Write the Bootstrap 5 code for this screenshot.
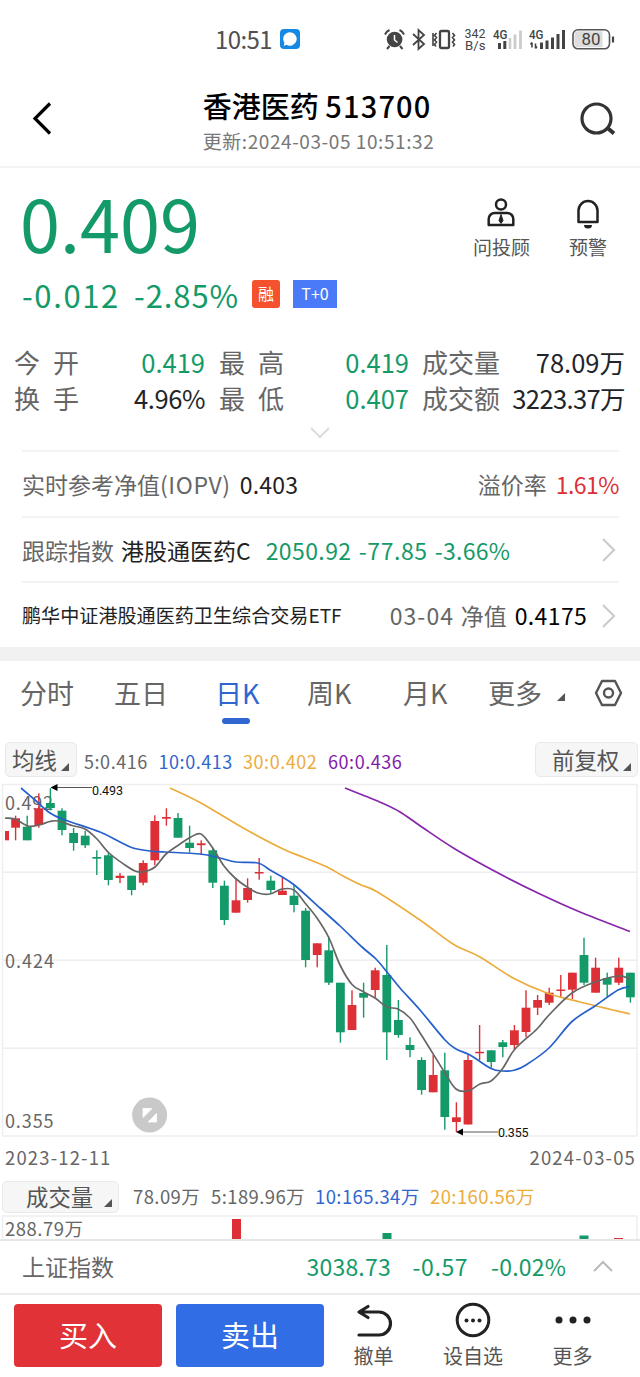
<!DOCTYPE html>
<html lang="zh-CN">
<head>
<meta charset="utf-8">
<meta name="viewport" content="width=device-width, initial-scale=1">
<title>香港医药 513700</title>
<link href="https://cdn.jsdelivr.net/npm/bootstrap@5.3.0/dist/css/bootstrap.min.css" rel="stylesheet">
<style>
:root{--up:#dc3036;--down:#149a68;--brand:#2f66d0;--ink:#222;--soft:#666;}
body{font-family:"Noto Sans CJK SC","Noto Sans",sans-serif;width:640px;height:1377px;overflow:hidden;background:#fff;color:var(--ink);line-height:1;font-size:23px}
svg{display:block;flex:none;overflow:visible}
.screen{height:1377px}
.screen>*{flex:none}
span,a{white-space:nowrap}
.c-up{color:var(--up)}.c-down{color:var(--down)}.c-soft{color:var(--soft)}.c-brand{color:var(--brand)}
.c-gold{color:#ecac3c}.c-violet{color:#8020a8}
.status{height:78px;padding:0 25px 0 215px;color:#505050}
.status .clock{font-size:24px;letter-spacing:-.6px;width:65px}
.titlebar{height:90px;border-bottom:2px solid #f3f3f3;padding:0 23px 4px 31px}
.titlebar h1{font-size:29px;font-weight:500;margin:0;color:#000;line-height:1}
.titlebar h1 b{font-weight:500;letter-spacing:1.2px}
.stamp{font-size:19px;letter-spacing:.58px;color:#777;margin-top:11px}
.quote{height:170px;padding:0 22px}
.price{font-size:72px;margin:18px 0 0 -2px}
.delta{font-size:31px;margin-top:18px;height:36px}
.tag{height:28px;font-size:16px;color:#fff;display:flex;align-items:center;justify-content:center;padding-bottom:2px}
.act{font-size:19px;color:#555}
.metrics{height:70px;display:grid;grid-template-columns:65px 126px 14px 65px 125px 13px 78px 125px;grid-template-rows:36px 36px;padding-left:14px;font-size:26px;color:var(--soft);align-items:center}
.metrics span{text-align:right}
.metrics .num{font-size:25.5px}
.metrics .lab{display:flex;justify-content:space-between}
.info{height:65.5px;border-top:2px solid #f3f3f3;margin:0 21px 0 22px;padding-top:2px}
.band{height:14px;background:#f1f1f1}
.tabs{height:79px;font-size:27px;color:var(--soft);padding:18px 0 0 20px}
.tabs .bar{width:28px;height:6px;border-radius:3px;background:var(--brand);margin:12px 0 0 7px}
.corner{width:0;height:0;border-left:8px solid transparent;border-bottom:8px solid #555;display:inline-block}
.pill{background:#f6f6f6;border:1.5px solid #e9e9e9;border-radius:5px;height:35px;font-size:22.4px;color:#555}
.tools{height:44px;font-size:18px;letter-spacing:.55px;padding:2.5px 2px 0 5px}
.dates{height:43px;font-size:18.5px;letter-spacing:1.15px;color:var(--soft);padding:10px 5px 0}
.vols{height:34px;font-size:18.5px;letter-spacing:.4px;padding:0 0 1px 2px}
.index{height:56px;border-top:2px solid #e6e6e6;border-bottom:2px solid #ececec;padding:0 25px 0 22px}
.trade{height:83px;padding:9px 0 0 14px}
.trade .btn{width:148px;height:63px;border:0;border-radius:4px;color:#fff;font-size:29px;line-height:1;padding:0 0 2px}
.foot{font-size:20px;color:#555}
</style>
</head>
<body>
<div class="screen d-flex flex-column">

<div class="status d-flex align-items-center">
  <span class="clock">10:51</span>
  <svg width="20" height="20" viewBox="0 0 20 20"><rect width="20" height="20" rx="4" fill="#1689e4"/><path d="M10 3.200a6.800 6.800 0 1 1-3.600 12.600L3.800 17l.6-3.200A6.800 6.800 0 0 1 10 3.200z" fill="#fff"/></svg>
  <svg class="ms-auto" width="231" height="26" viewBox="384 26 231 26" fill="none" stroke="#444">
    <circle cx="394.600" cy="39.500" r="7.800" fill="#444" stroke="none"/><path d="M394.500 35v5l3 2.500" stroke="#fff" stroke-width="1.500"/>
    <path d="M385 34.500a9 9 0 0 1 4.500-4.500M404 34.500a9 9 0 0 0-4.500-4.500M389.500 46l-2.500 3M400 46l2.500 3" stroke-width="2"/>
    <path d="M413 34l11 10-5.500 5V30l5.500 5-11 10" stroke-width="1.800"/>
    <rect x="440" y="31" width="9" height="17" rx="1.500" stroke-width="2.300"/>
    <path d="M436.500 33l-2 2.500 2 2-2 2.500 2 2-2 2.500 1.500 2M433 33v13M452.500 33l2 2.500-2 2 2 2.500-2 2 2 2.500-1.500 2" stroke-width="1.600"/>
    <g fill="#444" stroke="none" font-family="Roboto,sans-serif" font-size="12.500"><text x="464.500" y="38" textLength="21" lengthAdjust="spacingAndGlyphs">342</text><text x="465" y="50" textLength="20.500" lengthAdjust="spacingAndGlyphs">B/s</text></g>
    <g fill="#444" stroke="none" font-family="Roboto,sans-serif" font-size="12" font-weight="500"><text x="493" y="38.500" textLength="14.500" lengthAdjust="spacingAndGlyphs">4G</text><text x="529" y="38.500" textLength="14.500" lengthAdjust="spacingAndGlyphs">4G</text></g>
    <path d="M499.500 49v-6M504.800 49v-8" stroke-width="3"/><path d="M510 49v-11" stroke="#ccc" stroke-width="2.600"/><path d="M515 49v-14.500M520.500 49v-18.500" stroke="#ccc" stroke-width="2.800"/>
    <path d="M532 42.500v5M535.500 43.500v5M530.500 44.500l1.500-2M537 46.500l-1.500 2" stroke-width="1.600"/>
    <path d="M541.500 49v-6.500M547 49v-8.500M552.500 49v-11.500M558 49v-15M563.500 49v-19" stroke-width="3"/>
    <rect x="573" y="29.800" width="36.500" height="19" rx="5" stroke-width="1.600" stroke="#555" fill="#fff"/><path d="M578 31.300h24.500v16H578a3.500 3.500 0 0 1-3.500-3.500v-9a3.500 3.500 0 0 1 3.500-3.500z" fill="#ddd" stroke="none"/><path d="M613 36.500v6" stroke-width="2.200"/>
    <text x="581.500" y="45.300" font-family="Roboto,sans-serif" font-size="17" fill="#444" stroke="none" textLength="19" lengthAdjust="spacingAndGlyphs">80</text>
  </svg>
</div>

<header class="titlebar d-flex align-items-center justify-content-between">
  <svg width="22" height="36" viewBox="0 0 22 36"><path d="M19 1.500L4 16.500l15 15" fill="none" stroke="#000" stroke-width="3.200"/></svg>
  <div style="padding-left:5px">
    <h1>香港医药 <b>513700</b></h1>
    <div class="stamp">更新:2024-03-05 10:51:32</div>
  </div>
  <svg width="38" height="36" viewBox="0 0 38 36"><g fill="none" stroke="#333" stroke-width="3.200"><circle cx="17.500" cy="16.500" r="14.500"/><path d="M28 25.500l7 6" stroke-width="4"/></g></svg>
</header>

<section class="quote d-flex justify-content-between">
  <div>
    <div class="price c-down">0.409</div>
    <div class="delta d-flex align-items-center c-down">
      <span style="letter-spacing:1.6px;width:112px">-0.012</span><span style="letter-spacing:.9px;width:118px">-2.85%</span>
      <span class="tag" style="width:28px;background:#f4512c;border-radius:3px">融</span>
      <span class="tag" style="width:44px;margin-left:13px;background:#4a7af8">T+0</span>
    </div>
  </div>
  <div class="d-flex act" style="padding:31px 11px 0 0;gap:39px">
    <div class="d-flex flex-column align-items-center">
      <svg width="28" height="30" viewBox="0 0 28 30" fill="none" stroke="#222" stroke-width="2.500"><circle cx="14" cy="5.500" r="5"/><path d="M1.700 26V20a6 6 0 0 1 6-6h12.600a6 6 0 0 1 6 6v6z" stroke-linejoin="round"/><path d="M14 15.500l2 6-2 3-2-3z" fill="#222" stroke-width="1"/></svg>
      <span style="margin-top:8px">问投顾</span>
    </div>
    <div class="d-flex flex-column align-items-center">
      <svg width="28" height="30" viewBox="0 0 28 30"><path d="M4.500 23V11.500a9.500 9.500 0 0 1 19 0V23z" fill="none" stroke="#222" stroke-width="2.500" stroke-linejoin="round"/><path d="M10 26h8a4 3.500 0 0 1-8 0z" fill="#222"/></svg>
      <span style="margin-top:8px">预警</span>
    </div>
  </div>
</section>

<section class="metrics" style="margin-top:6px">
  <span class="lab"><i class="fst-normal">今</i><i class="fst-normal">开</i></span><span class="num c-down">0.419</span><i></i>
  <span class="lab"><i class="fst-normal">最</i><i class="fst-normal">高</i></span><span class="num c-down">0.419</span><i></i>
  <span>成交量</span><span class="num text-dark">78.09万</span>
  <span class="lab"><i class="fst-normal">换</i><i class="fst-normal">手</i></span><span class="num text-dark" style="letter-spacing:-.4px">4.96%</span><i></i>
  <span class="lab"><i class="fst-normal">最</i><i class="fst-normal">低</i></span><span class="num c-down">0.407</span><i></i>
  <span>成交额</span><span class="num text-dark" style="letter-spacing:-.6px">3223.37万</span>
</section>
<div class="d-flex justify-content-center" style="height:36px;padding-top:12px"><svg width="22" height="14" viewBox="0 0 22 14"><path d="M2 2l9 9 9-9" fill="none" stroke="#ddd" stroke-width="2"/></svg></div>

<div class="info d-flex align-items-center">
  <span class="c-soft">实时参考净值<span style="letter-spacing:.6px">(IOPV)</span></span><span style="margin-left:9px;letter-spacing:.2px">0.403</span>
  <span class="ms-auto c-soft">溢价率</span><span class="c-up" style="margin-left:9px;letter-spacing:-.5px">1.61%</span>
</div>
<div class="info d-flex align-items-center">
  <span class="c-soft">跟踪指数</span><span style="margin-left:7px">港股通医药C</span>
  <span class="c-down" style="margin-left:15px;letter-spacing:.4px;width:93px">2050.92</span><span class="c-down" style="letter-spacing:.6px;width:76px">-77.85</span><span class="c-down" style="letter-spacing:.3px">-3.66%</span>
  <svg class="ms-auto" width="18" height="26" viewBox="0 0 18 26"><path d="M2 2l11 11L2 24" fill="none" stroke="#ccc" stroke-width="2.200"/></svg>
</div>
<div class="info d-flex align-items-center">
  <span style="font-size:19.1px">鹏华中证港股通医药卫生综合交易ETF</span>
  <span class="c-soft" style="margin-left:48px;letter-spacing:1.1px;width:71px">03-04</span><span class="c-soft">净值</span><span style="margin-left:8px;letter-spacing:.4px;color:#000">0.4175</span>
  <svg class="ms-auto" width="18" height="26" viewBox="0 0 18 26"><path d="M2 2l11 11L2 24" fill="none" stroke="#ccc" stroke-width="2.200"/></svg>
</div>
<div class="band"></div>

<nav class="tabs d-flex">
  <span style="width:94px">分时</span><span style="width:101px">五日</span>
  <div class="c-brand" style="width:92px"><span>日K</span><div class="bar"></div></div>
  <span style="width:96px">周K</span><span style="width:85px">月K</span><span>更多</span>
  <i class="corner" style="margin:14px 0 0 15px"></i>
  <svg style="margin:0 0 0 28px" width="32" height="28" viewBox="0 0 32 28" fill="none" stroke="#555" stroke-width="2.400" stroke-linejoin="round"><path d="M9 2h13l6 12-6 12H9L3 14z"/><circle cx="15.500" cy="14" r="4.500"/></svg>
</nav>

<div class="tools d-flex">
  <div class="pill d-flex align-items-center" style="width:72px;padding-left:6px;letter-spacing:0"><span>均线</span><i class="corner" style="margin:15px 0 0 4px"></i></div>
  <div class="d-flex align-items-center c-soft" style="height:37px;margin-left:7px">
    <span style="width:74.500px">5:0.416</span><span class="c-brand" style="width:84.500px">10:0.413</span><span class="c-gold" style="width:85px">30:0.402</span><span class="c-violet">60:0.436</span>
  </div>
  <div class="pill d-flex align-items-center ms-auto" style="width:103px;padding-left:16px;letter-spacing:0"><span>前复权</span><i class="corner" style="margin:15px 0 0 4px"></i></div>
</div>

<svg width="640" height="354" viewBox="0 784 640 354">
  <path d="M2 784.500H637M2 872.300H637M2 960.300H637M2 1048.300H637M2 1136H637M2.500 784V1136M637 784V1136" stroke="#eee" stroke-width="1.500" fill="none"/>
  <g font-size="18" fill="#666"><text x="5" y="809.500" textLength="48">0.492</text><text x="5" y="968" textLength="49">0.424</text><text x="5" y="1127.500" textLength="48.500">0.355</text></g>
  <g id="candles"></g>
  <g id="averages" fill="none" stroke-width="1.700"></g>
  <g stroke="#555" stroke-width="1"><path d="M57 787.500H92M462 1132H498"/></g>
  <path d="M50.500 787.500l7-3.500v7zM456 1132l7-3.500v7z" fill="#000"/>
  <g font-family="Roboto,sans-serif" font-size="12.500" fill="#111"><text x="92" y="794.500" textLength="31">0.493</text><text x="498" y="1136.500" textLength="30.500">0.355</text></g>
  <circle cx="149.600" cy="1115" r="17.500" fill="#c9c9c9"/>
  <path d="M143 1108.500h9l-9 9zM156.500 1113.500v8.500h-8.500z" fill="#fff" stroke="#fff" stroke-width=".8" stroke-linejoin="round"/>
</svg>

<div class="dates d-flex justify-content-between"><span>2023-12-11</span><span style="margin-right:-1px">2024-03-05</span></div>

<div class="vols d-flex align-items-center">
  <div class="pill d-flex align-items-center" style="width:117px;height:32px;padding:0 0 1px 23px;letter-spacing:0"><span>成交量</span><i class="corner" style="margin:13px 0 0 11px"></i></div>
  <div class="d-flex c-soft" style="margin:-2px 0 0 14px"><span style="width:78px">78.09万</span><span style="width:104px">5:189.96万</span><span class="c-brand" style="width:115px">10:165.34万</span><span class="c-gold">20:160.56万</span></div>
</div>
<svg width="640" height="24" viewBox="0 1215 640 24">
  <path d="M2 1216H637M2.500 1216V1239M637 1216V1239" stroke="#eee" stroke-width="1.500" fill="none"/>
  <text x="5" y="1236" font-size="18.500" fill="#666" textLength="78">288.79万</text>
  <path d="M232 1219h9v20h-9zM614 1238h9v1h-9z" fill="#dc3036"/><path d="M382.500 1233h9v6h-9zM579.500 1235.500h9v3.500h-9z" fill="#149a68"/>
</svg>

<div class="index d-flex align-items-center">
  <span class="c-soft">上证指数</span>
  <span class="ms-auto c-down" style="width:106px;letter-spacing:.2px">3038.73</span><span class="c-down" style="width:78.500px;letter-spacing:.6px">-0.57</span><span class="c-down" style="width:75px;letter-spacing:.2px">-0.02%</span>
  <svg style="margin-left:27px" width="22" height="14" viewBox="0 0 22 14"><path d="M1 11l9-9 9 9" fill="none" stroke="#bbb" stroke-width="2"/></svg>
</div>

<footer class="trade d-flex">
  <button class="btn" style="background:#e03237">买入</button>
  <button class="btn" style="background:#316de4;margin-left:14px">卖出</button>
  <div class="d-flex foot">
    <div class="d-flex flex-column align-items-center" style="width:99px">
      <svg width="38" height="36" viewBox="0 0 38 36" fill="none" stroke="#222" stroke-width="3.200" stroke-linecap="round" stroke-linejoin="round"><path d="M13 2.500L4 8l9 5.500M4 8h20a11.500 11.500 0 0 1 0 23H4"/></svg>
      <span style="margin-top:6px">撤单</span>
    </div>
    <div class="d-flex flex-column align-items-center" style="width:100px">
      <svg width="36" height="36" viewBox="0 0 36 36"><circle cx="18" cy="16" r="15.800" fill="none" stroke="#222" stroke-width="3"/><g fill="#222"><circle cx="11.500" cy="16.500" r="2"/><circle cx="18" cy="16.500" r="2"/><circle cx="24.500" cy="16.500" r="2"/></g></svg>
      <span style="margin-top:6px">设自选</span>
    </div>
    <div class="d-flex flex-column align-items-center" style="width:99px">
      <svg width="36" height="36" viewBox="0 0 36 36" fill="#222"><circle cx="4" cy="16" r="3.500"/><circle cx="18" cy="16" r="3.500"/><circle cx="32" cy="16" r="3.500"/></svg>
      <span style="margin-top:6px">更多</span>
    </div>
  </div>
</footer>
</div>

<script src="https://cdn.jsdelivr.net/npm/bootstrap@5.3.0/dist/js/bootstrap.bundle.min.js"></script>
<script>
// Each candle: [rising, body top, body bottom, high, low]
const candles = [
[1,818.3,827.7,815.7,840.3],[0,826.7,840.3,815.7,840.3],[1,808.3,825,793.3,827.7],[0,803,808,788.3,810.3],[0,810.7,830,808.3,835.3],
[0,833,843,828,850.7],[0,835.7,845.3,830.7,848],[0,857,858.7,850.3,875],[0,855.3,880,852.7,885.3],[1,875.7,878,873,883],
[0,875.7,890,875.7,895.3],[1,863,882.7,860.3,885.3],[1,821,860.3,815.3,865.3],[1,817,818.7,808.3,825.7],[0,818,837.7,813,837.7],
[0,842.7,848,825.7,852.3],[1,843.3,845.2,840.3,855],[0,850.3,882.7,847.7,888],[0,885.7,920,880.7,925],[1,900.3,912.7,878.3,912.7],
[1,888,900,878.3,902.7],[1,872,873.5,858,879.7],[0,880.7,890,875.7,893.7],[1,890.7,895,876.7,895],[0,895.7,905,884.3,912.3],
[0,910.7,960,908,967.3],[1,943.3,955,943.3,967.3],[0,950.3,982.7,936.7,985],[0,982.7,1032.3,982.7,1042.7],[1,1005,1030,990.3,1030],
[0,993,997.7,982.7,1017.7],[1,970.3,990,967.7,997.7],[0,975,1032.3,945,1060],[0,1020,1035,1000,1037.7],[0,1045,1050,1037.3,1057.3],
[0,1060,1090,1057.3,1094.7],[1,1075,1092.3,1055,1092.3],[0,1070.3,1117,1052.7,1129.7],[1,1117.3,1122,1102.3,1132],[1,1060,1124.5,1055,1124.5],
[1,1051.8,1053.3,1025,1060],[0,1050.3,1062,1050.3,1068.7],[0,1042.3,1047,1040,1057.3],[1,1030.3,1045,1025,1050],[1,1007.7,1032,990.3,1037.3],
[1,1000,1007.7,995,1015],[1,992.7,1002.7,987.7,1005],[1,989.5,991,975,997],[1,972.7,989.7,972.7,999],[0,955,982.7,937.7,985],
[1,967.7,992.7,957.7,992.7],[0,978,984.7,972.7,998],[1,967.7,982.7,957.7,985],[0,972.7,997.3,972.7,1002.7]];
let bars = '<rect x="5" y="831" width="4" height="9.300" fill="#dc3036"/>';
candles.forEach(([up, top, bottom, high, low], i) => {
  const x = 15.6 + 11.6 * i, fill = up ? '#dc3036' : '#149a68';
  bars += `<rect x="${x - .7}" y="${high}" width="1.400" height="${low - high}" fill="${fill}"/><rect x="${x - 4.4}" y="${top}" width="8.800" height="${bottom - top}" fill="${fill}"/>`;
});
document.getElementById('candles').innerHTML = bars;

const averages = {
'#8726ab':[[345,788],[365,796],[382,803],[400,812],[420,825.7],[455,849],[500,874],[540,894],[580,912],[630,931.5]],
'#ecac3c':[[170,788],[200,802.5],[245,829],[283,849],[304,857.5],[327,867],[343,876],[360,884.5],[377,891.7],[420,920],[453,944],[480,957],[513,978],[547,993],[580,1002],[630,1014]],
'#2660cc':[[21,788],[35,800],[50,813],[65,820],[100,832],[120,842],[133,848],[150,851],[165,852],[200,854],[220,858],[236,862],[258,863],[270,870],[293,884],[320,908],[340,926],[362,947],[376,959],[387,972],[400,988],[420,1010],[445,1040],[456,1049],[470,1055],[491,1068.5],[503,1071],[515,1070],[526,1065],[549,1048],[572,1021.5],[595,1006],[618,990],[630,986.5]],
'#666':[[5,818],[15,819],[28,826],[39,825],[50,821.5],[58,821],[73,825.7],[85,829],[97,839],[109,853],[125,865],[135,871],[143,872],[155,867],[166,854],[180,844],[191,837],[201,834],[212,847],[224,866],[235,878],[247,887],[258,893],[270,894],[282,889],[294,890],[305,903],[317,918],[329,938],[340,965],[352,984.5],[363,991.5],[375,998],[387,1007],[398,1009],[410,1018],[422,1036],[445,1073],[456,1089],[468,1091],[480,1084],[491,1081],[503,1068],[515,1049],[537,1029],[549,1015],[572,993],[595,982],[618,976],[630,979]]};
// Catmull-Rom spline through the points
const curve = p => p.reduce((d, [x, y], i) => {
  if (!i) return `M${x} ${y}`;
  const a = p[i - 2] || p[i - 1], b = p[i - 1], c = p[i + 1] || p[i];
  return d + `C${b[0] + (x - a[0]) / 6} ${b[1] + (y - a[1]) / 6} ${x - (c[0] - b[0]) / 6} ${y - (c[1] - b[1]) / 6} ${x} ${y}`;
}, '');
document.getElementById('averages').innerHTML = Object.entries(averages).map(([s, p]) => `<path d="${curve(p)}" stroke="${s}"/>`).join('');
</script>
</body>
</html>
